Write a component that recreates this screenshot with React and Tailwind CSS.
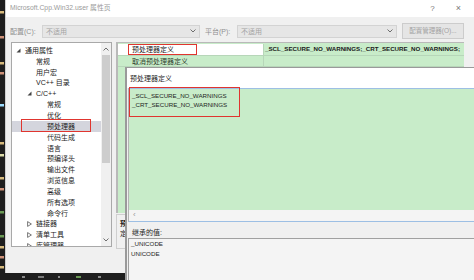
import React from 'react';

// property page tree: [label, level, arrow, selected]
const TREE = [
  ['通用属性', 0, 'open'],
  ['常规', 1],
  ['用户宏', 1],
  ['VC++ 目录', 1],
  ['C/C++', 1, 'open'],
  ['常规', 2],
  ['优化', 2],
  ['预处理器', 2, null, true],
  ['代码生成', 2],
  ['语言', 2],
  ['预编译头', 2],
  ['输出文件', 2],
  ['浏览信息', 2],
  ['高级', 2],
  ['所有选项', 2],
  ['命令行', 2],
  ['链接器', 1, 'closed'],
  ['清单工具', 1, 'closed'],
  ['库管理器', 1, 'closed'],
];

const INDENT = ['pl-[4px]', 'pl-[15px]', 'pl-[26px]'];

// bits of the code editor showing behind the dialog
const CODE_MARKS = [
  [12, '#d7ba7d'], [37, '#ce9178'], [63, '#d7ba7d'], [73, '#ce9178'],
  [105, '#9cdcfe'], [143, '#d7ba7d'], [155, '#dcdcaa'], [178, '#d7ba7d'],
  [189, '#ce9178'], [212, '#6a9955'], [236, '#6a9955'], [247, '#d7ba7d'],
  [257, '#ce9178'], [267, '#d7ba7d'],
];

const Arrow = ({ type }) => {
  if (type === 'open') {
    return (
      <svg width="5" height="5" viewBox="0 0 5 5">
        <path d="M4.5 0.5V4.5H0.5Z" fill="#444" />
      </svg>
    );
  }
  if (type === 'closed') {
    return (
      <svg width="5" height="6" viewBox="0 0 5 6">
        <path d="M0.6 0.6L4.4 3L0.6 5.4Z" fill="none" stroke="#555" strokeWidth="0.8" />
      </svg>
    );
  }
  return null;
};

const Chevron = ({ up }) => (
  <svg width="6" height="4" viewBox="0 0 6 4">
    <path d={up ? 'M0.5 3.5L3 1L5.5 3.5' : 'M0.5 0.5L3 3L5.5 0.5'} fill="none" stroke="#606060" strokeWidth="0.9" />
  </svg>
);

const Combo = ({ width }) => (
  <div className={`flex h-[13px] items-center justify-between border border-[#d3d3d3] bg-[#e6e6e6] pl-[3px] pr-[3px] text-[7px] text-[#a3a3a3] ${width}`}>
    <span>不适用</span>
    <Chevron />
  </div>
);

const Tree = () => (
  <div className="ml-[5px] flex h-[205px] w-[101px] shrink-0 border border-[#a9a9a9] bg-white">
    <div className="flex flex-1 flex-col overflow-hidden pt-[2px]">
      {TREE.map(([label, level, arrow, selected], i) => (
        <div
          key={i}
          className={`relative flex h-[10.85px] shrink-0 items-center text-[7px] leading-none text-[#222] ${INDENT[level]} ${selected ? 'bg-[#d4d5dd]' : ''}`}
        >
          <span className="flex w-[9px] shrink-0 items-center">
            <Arrow type={arrow} />
          </span>
          <span className="whitespace-nowrap">{label}</span>
          {selected && (
            <div className="absolute -top-[2px] left-[9px] h-[13px] w-[70px] border-[1.5px] border-[#e0352f]" />
          )}
        </div>
      ))}
    </div>
    <div className="flex w-[10px] shrink-0 flex-col bg-[#f0f0f0]">
      <div className="flex h-[12px] items-center justify-center">
        <Chevron up />
      </div>
      <div className="mx-[1px] h-[108px] bg-[#cdcdcd]" />
      <div className="flex-1" />
      <div className="flex h-[12px] items-center justify-center">
        <Chevron />
      </div>
    </div>
  </div>
);

const Grid = () => (
  <div className="ml-[4px] flex w-[348px] shrink-0 flex-col">
    <div className="flex h-[171px] flex-col border-l-[2px] border-t border-[#b9b9b9] bg-[#c8ecc9] pt-[1px]">
      <div className="flex h-[11px] shrink-0">
        <div className="relative flex w-[145px] items-center bg-white pl-[14px] text-[7px] leading-none text-[#222]">
          预处理器定义
          <div className="absolute left-[10px] top-0 h-[11px] w-[69px] border-[1.5px] border-[#e0352f]" />
        </div>
        <div className="w-px bg-[#b7d6b9]" />
        <div className="flex flex-1 items-center overflow-hidden whitespace-nowrap pl-[1px] text-[6.2px] font-bold leading-none text-[#1a1a1a]">
          _SCL_SECURE_NO_WARNINGS;_CRT_SECURE_NO_WARNINGS;
        </div>
      </div>
      <div className="flex h-[11px] shrink-0 border-t border-[#b7d6b9]">
        <div className="flex w-[145px] items-center pl-[14px] text-[7px] leading-none text-[#2f3f2f]">
          取消预处理器定义
        </div>
        <div className="w-px bg-[#b7d6b9]" />
        <div className="flex-1" />
      </div>
      <div className="flex h-[11px] shrink-0 border-t border-[#b7d6b9]">
        <div className="flex w-[145px] items-center pl-[14px] text-[7px] leading-none text-[#2f3f2f]">
          取消所有预处理器定义
        </div>
        <div className="w-px bg-[#b7d6b9]" />
        <div className="flex-1" />
      </div>
    </div>
    <div className="mt-[1px] h-[35px] border border-[#cfcfcf] bg-[#f0f0f0] pl-[3px] pt-[5px] text-[7px] leading-none text-[#222]">
      <div className="font-bold">预处理器定义</div>
      <div className="mt-[3px]">定义源文件的预处理符号。</div>
    </div>
  </div>
);

const Popup = () => (
  <div className="absolute left-[125px] top-[67px] flex h-[215px] w-[352px] flex-col border-l-[2px] border-t border-[#9a9a9a] bg-[#f0f0f0] text-[#1e1e1e]">
    <div className="flex h-[20px] shrink-0 items-center bg-white pl-[3px] text-[7px] leading-none">
      预处理器定义
    </div>
    <div className="ml-[1px] flex h-[134px] shrink-0 flex-col border-y-[1.5px] border-l border-y-[#9dbfe4] border-l-[#b4b4b4]">
      <div className="h-[120.5px] bg-[#c8ecc9] pl-[3px] pt-[1.5px] text-[6.2px] leading-[9.3px]">
        <div>_SCL_SECURE_NO_WARNINGS</div>
        <div>_CRT_SECURE_NO_WARNINGS</div>
      </div>
      <div className="flex flex-1 items-center bg-[#f4f4f4] pl-[4px] text-[8px] leading-none text-[#9a9a9a]">
        ‹
      </div>
    </div>
    <div className="flex h-[16px] shrink-0 items-end pb-[1px] pl-[5px] text-[7px] leading-[8px]">
      继承的值:
    </div>
    <div className="ml-[1px] flex-1 border-l border-t border-[#a0a0a0] bg-[#f4f4f4] pl-[2px] text-[6.2px] leading-[10px]">
      <div>_UNICODE</div>
      <div>UNICODE</div>
    </div>
    <div className="absolute left-[2px] top-[19px] h-[30px] w-[111px] border-[1.5px] border-[#e0352f]" />
  </div>
);

export default function App() {
  return (
    <div className="relative h-[280px] w-[474px] overflow-hidden bg-[#1e1e1e] font-['Liberation_Sans','Noto_Sans_CJK_SC',sans-serif]">
      <div className="flex h-[273px]">
        <svg className="shrink-0" width="5" height="273" viewBox="0 0 5 273">
          {CODE_MARKS.map(([y, c], i) => (
            <rect key={i} x="0" y={y - 1} width="4" height="2.5" fill={c} />
          ))}
        </svg>
        <div className="flex w-[469px] flex-col border-l border-[#cfcfcf] bg-[#f0f0f0]">
          {/* title bar */}
          <div className="flex h-[17px] shrink-0 items-center bg-white pl-[4px] pr-[13px] text-[6.8px] leading-none text-[#9a9a9a]">
            <span>Microsoft.Cpp.Win32.user 属性页</span>
            <span className="ml-auto text-[8px] text-[#777]">?</span>
            <span className="ml-[21px] text-[9px] text-[#777]">×</span>
          </div>
          {/* configuration row */}
          <div className="flex h-[25px] shrink-0 items-center pl-[4px] pt-[3px] text-[7px] leading-none text-[#8f8f8f]">
            <span className="w-[32px]">配置(C):</span>
            <Combo width="w-[158px]" />
            <span className="ml-[5px] w-[32px]">平台(P):</span>
            <Combo width="w-[160px]" />
            <div className="ml-[5px] flex h-[16px] w-[62px] items-center justify-center border border-[#cccccc] bg-[#e5e5e5] text-[6.5px] text-[#a3a3a3]">
              配置管理器(O)...
            </div>
          </div>
          {/* tree + grid */}
          <div className="flex">
            <Tree />
            <Grid />
          </div>
        </div>
      </div>
      <svg className="block" width="474" height="7" viewBox="0 0 474 7">
        <rect x="22" y="3" width="3" height="2" fill="#8a8a8a" />
        <rect x="38" y="3" width="6" height="2" fill="#7a7a7a" />
        <rect x="58" y="3" width="2" height="2" fill="#8a8a8a" />
        <rect x="76" y="3" width="5" height="2" fill="#6a9955" />
        <rect x="98" y="3" width="3" height="2" fill="#8a8a8a" />
      </svg>
      <Popup />
    </div>
  );
}
